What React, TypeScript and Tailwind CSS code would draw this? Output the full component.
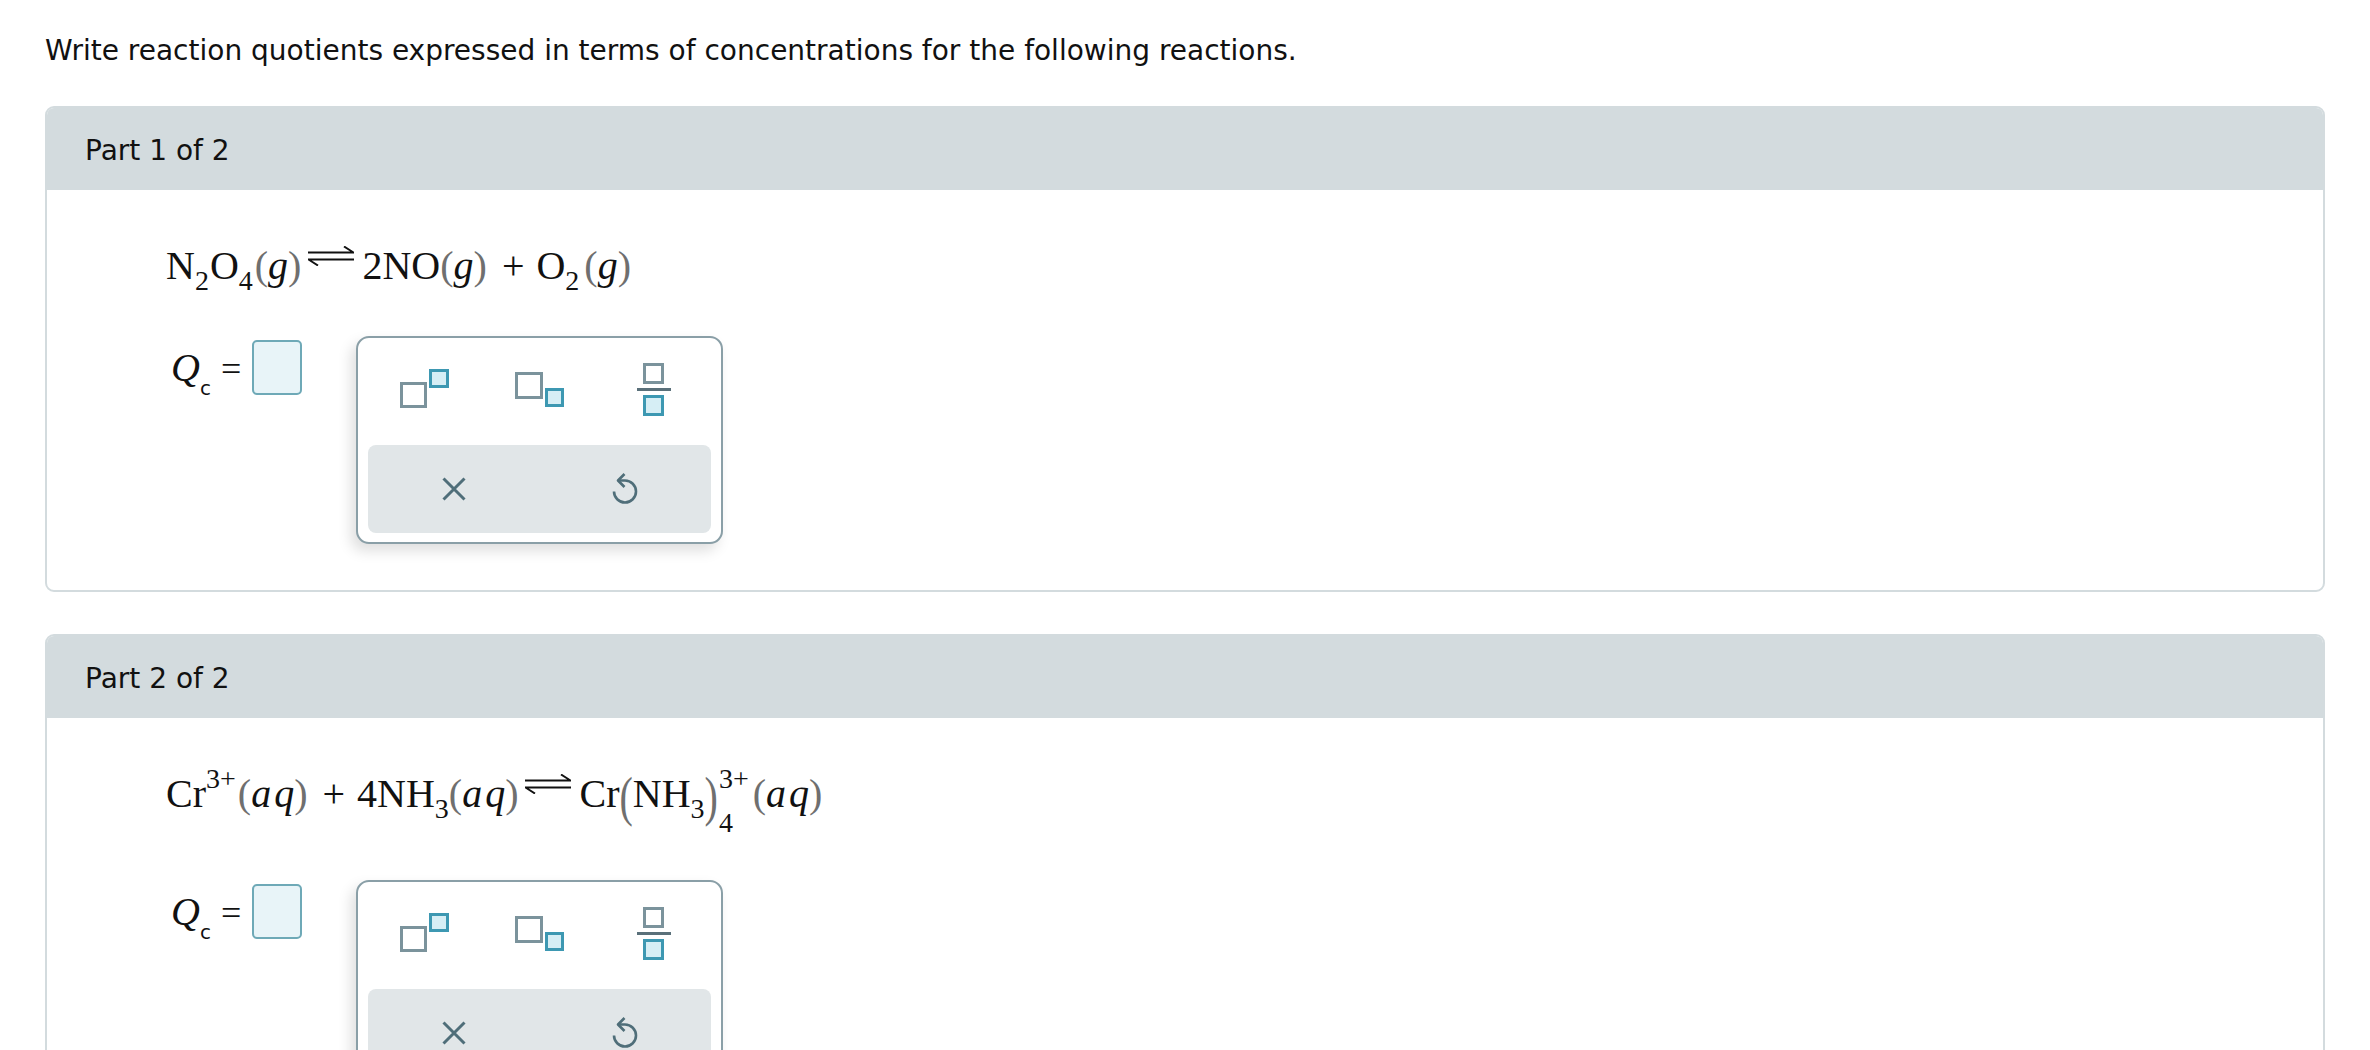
import type { ReactNode } from "react";

const serif = "font-['Liberation_Serif','Times_New_Roman',serif]";

function Paren({ children }: { children: ReactNode }) {
  return <span className="text-[#6f6f6f]">{children}</span>;
}

function BigParen({ children }: { children: ReactNode }) {
  return (
    <span className="relative top-[3px] inline-block origin-center scale-y-[1.37] leading-[40px] text-[#6f6f6f]">
      {children}
    </span>
  );
}

function Sub({ children }: { children: ReactNode }) {
  return <span className="relative top-[11px] text-[28px] leading-none">{children}</span>;
}

function Sup({ children }: { children: ReactNode }) {
  return <span className="relative -top-[19px] text-[28px] leading-none">{children}</span>;
}

function Phase({ label }: { label: "g" | "aq" }) {
  return (
    <span className="inline-flex items-baseline">
      <Paren>(</Paren>
      {label === "g" ? (
        <span className="italic">g</span>
      ) : (
        <span className="italic">
          <span className="mr-[3px]">a</span>q
        </span>
      )}
      <Paren>)</Paren>
    </span>
  );
}

function Equilibrium() {
  return (
    <svg width="46" height="20" viewBox="0 0 46 20" className="relative -top-[13px] ml-[7px] mr-[8px] shrink-0">
      <path d="M0 6.5H45.5L36 0.5" fill="none" stroke="#111" strokeWidth="2" />
      <path d="M46 13.5H0.5L10 19.5" fill="none" stroke="#111" strokeWidth="2" />
    </svg>
  );
}

function Plus() {
  return <span className="ml-[15px] mr-[12px]">+</span>;
}

function SuperscriptIcon() {
  return (
    <svg width="50" height="40" viewBox="0 0 50 40">
      <rect x="1.5" y="14.5" width="24" height="23" fill="none" stroke="#7b939c" strokeWidth="3" />
      <rect x="30.5" y="1.5" width="17" height="16" fill="#d6eef5" stroke="#3d98b2" strokeWidth="3" />
    </svg>
  );
}

function SubscriptIcon() {
  return (
    <svg width="49" height="35" viewBox="0 0 49 35">
      <rect x="1.5" y="1.5" width="25" height="24" fill="none" stroke="#7b939c" strokeWidth="3" />
      <rect x="31.5" y="17.5" width="16" height="16" fill="#d6eef5" stroke="#3d98b2" strokeWidth="3" />
    </svg>
  );
}

function FractionIcon() {
  return (
    <svg width="34" height="53" viewBox="0 0 34 53">
      <rect x="7.5" y="1.5" width="18" height="18" fill="none" stroke="#7b939c" strokeWidth="3" />
      <path d="M0 26.5H34" stroke="#5a707a" strokeWidth="3" />
      <rect x="7.5" y="33.5" width="18" height="18" fill="#d6eef5" stroke="#3d98b2" strokeWidth="3" />
    </svg>
  );
}

function ClearIcon() {
  return (
    <svg width="24" height="24" viewBox="0 0 24 24">
      <path d="M1.5 1.5L22.5 22.5M22.5 1.5L1.5 22.5" stroke="#4f6e79" strokeWidth="3" />
    </svg>
  );
}

function UndoIcon() {
  return (
    <svg width="26" height="34" viewBox="0 0 26 34">
      <path d="M12.5 2L6 8.5L12.5 15" fill="none" stroke="#4f6e79" strokeWidth="2.6" strokeLinejoin="round" />
      <path d="M6.5 8.5H13A11 11 0 1 1 2 19.5" fill="none" stroke="#4f6e79" strokeWidth="2.6" />
    </svg>
  );
}

function Palette() {
  return (
    <div className="ml-[54px] w-[367px] rounded-[13px] border-2 border-[#8a9fa7] bg-white px-[10px] pb-[9px] shadow-[-5px_7px_14px_rgba(0,0,0,0.13)]">
      <div className="grid h-[102px] grid-cols-3 items-center justify-items-center">
        <SuperscriptIcon />
        <SubscriptIcon />
        <FractionIcon />
      </div>
      <div className="mt-[5px] grid h-[88px] grid-cols-2 items-center justify-items-center rounded-[8px] bg-[#e1e6e8]">
        <ClearIcon />
        <UndoIcon />
      </div>
    </div>
  );
}

function AnswerRow({ top }: { top: string }) {
  return (
    <div className={`flex items-start pl-[119px] ${top}`}>
      <div className={`ml-[5px] mt-[10px] flex items-baseline ${serif} text-[40px] leading-[44px]`}>
        <span className="italic">Q</span>
        <span className="relative top-[14px] font-['DejaVu_Sans',sans-serif] text-[20px] leading-none">c</span>
        <span className="ml-[10px] text-[36px]">=</span>
      </div>
      <div className="ml-[11px] mt-[4px] h-[55px] w-[50px] rounded-[5px] border-2 border-[#6ea9b7] bg-[#e8f4f8]" />
      <Palette />
    </div>
  );
}

function Part({ n, equation, answerTop }: { n: number; equation: ReactNode; answerTop: string }) {
  return (
    <section className="overflow-hidden rounded-[9px] border-2 border-[#d3dbde] bg-white">
      <div className="h-[82px] bg-[#d3dbde] pl-[38px] pt-[27px] text-[28px] leading-[32px]">Part {n} of 2</div>
      <div className="pb-[46px] pt-[52px]">
        <div className={`flex h-[48px] items-baseline pl-[119px] ${serif} text-[40px] leading-[48px] text-[#111]`}>{equation}</div>
        <AnswerRow top={answerTop} />
      </div>
    </section>
  );
}

const eq1 = (
  <>
    <span>N</span>
    <Sub>2</Sub>
    <span className="ml-[1px]">O</span>
    <Sub>4</Sub>
    <span className="ml-[2px]" />
    <Phase label="g" />
    <Equilibrium />
    <span>2NO</span>
    <Phase label="g" />
    <Plus />
    <span>O</span>
    <Sub>2</Sub>
    <span className="ml-[5px]" />
    <Phase label="g" />
  </>
);

const eq2 = (
  <>
    <span>Cr</span>
    <Sup>3+</Sup>
    <span className="ml-[2px]" />
    <Phase label="aq" />
    <Plus />
    <span>4NH</span>
    <Sub>3</Sub>
    <Phase label="aq" />
    <Equilibrium />
    <span>Cr</span>
    <BigParen>(</BigParen>
    <span>NH</span>
    <Sub>3</Sub>
    <BigParen>)</BigParen>
    <span className="relative -top-[19px] ml-[1px] inline-flex flex-col text-[28px] leading-[28px]">
      <span>3+</span>
      <span className="mt-[16px]">4</span>
    </span>
    <span className="ml-[4px]" />
    <Phase label="aq" />
  </>
);

export default function App() {
  return (
    <div className="min-h-screen bg-white font-['DejaVu_Sans',sans-serif] text-[#111]">
      <div className="px-[45px] pt-[35px]">
        <p className="text-[28px] leading-[32px]">Write reaction quotients expressed in terms of concentrations for the following reactions.</p>
        <div className="mt-[39px] flex flex-col gap-[42px]">
          <Part n={1} equation={eq1} answerTop="mt-[46px]" />
          <Part n={2} equation={eq2} answerTop="mt-[62px]" />
        </div>
      </div>
    </div>
  );
}
